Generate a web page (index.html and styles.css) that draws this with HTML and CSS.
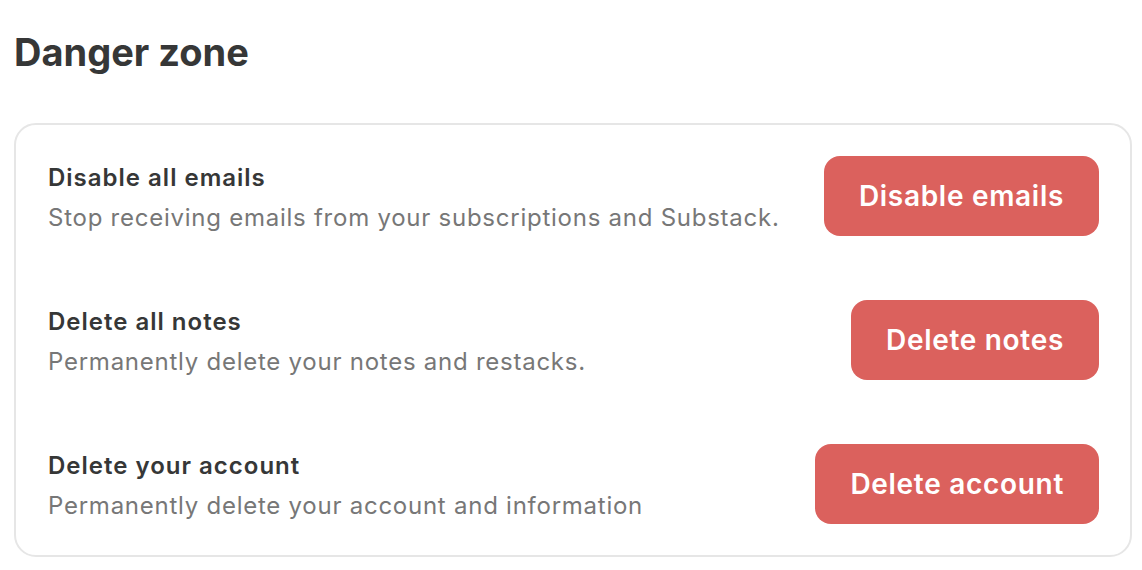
FILE: index.html
```html
<!DOCTYPE html>
<html>
  <head>
    <meta charset="utf-8">
    <title>Danger zone</title>
    <link rel="stylesheet" href="styles.css">
  </head>
  <body>
    <div class="page">
      <h1 class="title">Danger zone</h1>
      <div class="card">
        <div class="row">
          <div class="info">
            <div class="label">Disable all emails</div>
            <div class="desc">Stop receiving emails from your subscriptions and Substack.</div>
          </div>
          <button class="btn">Disable emails</button>
        </div>
        <div class="row">
          <div class="info">
            <div class="label">Delete all notes</div>
            <div class="desc">Permanently delete your notes and restacks.</div>
          </div>
          <button class="btn">Delete notes</button>
        </div>
        <div class="row">
          <div class="info">
            <div class="label">Delete your account</div>
            <div class="desc">Permanently delete your account and information</div>
          </div>
          <button class="btn">Delete account</button>
        </div>
      </div>
    </div>
  </body>
</html>
```

FILE: styles.css
```css
* {
  margin: 0;
  padding: 0;
  box-sizing: border-box;
}
body {
  background: #fff;
  font-family: Inter, "Noto Sans", sans-serif;
  color: #363737;
}
.page {
  padding: 29px 10px 0 14px;
}
.title {
  font-size: 38px;
  line-height: 46px;
  font-weight: 700;
  color: #363737;
  margin-bottom: 48px;
}
.card {
  border: 2px solid #e6e6e6;
  border-radius: 22px;
  padding: 31px 31px 31px 32px;
  display: flex;
  flex-direction: column;
  gap: 64px;
}
.row {
  display: flex;
  align-items: center;
  justify-content: space-between;
}
.info {
  padding-top: 4px;
}
.label {
  font-size: 24px;
  line-height: 32px;
  font-weight: 600;
  letter-spacing: 1px;
  color: #363737;
  margin-bottom: 8px;
}
.desc {
  font-size: 24px;
  line-height: 32px;
  letter-spacing: 0.75px;
  color: #777;
}
.btn {
  height: 80px;
  padding: 0 35px;
  border: none;
  border-radius: 16px;
  background: #db615d;
  color: #fff;
  font-family: Inter, "Noto Sans", sans-serif;
  font-size: 28px;
  font-weight: 600;
  letter-spacing: 0.7px;
}
```
